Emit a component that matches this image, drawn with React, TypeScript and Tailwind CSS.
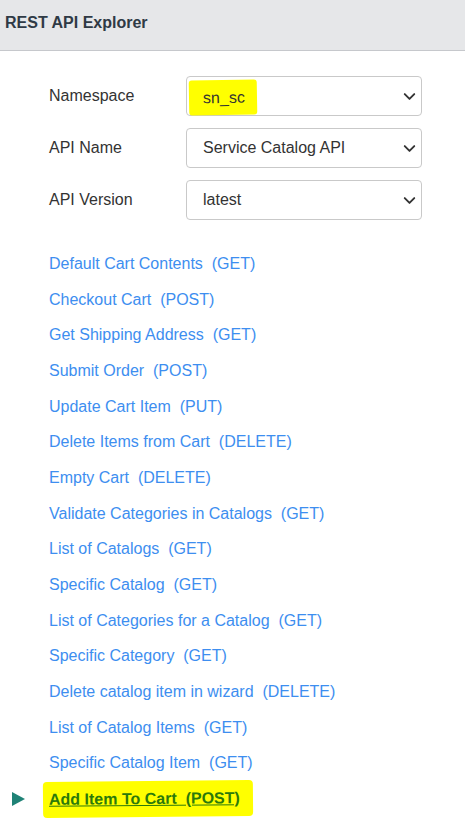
import { ChevronDown } from "lucide-react";

interface Endpoint {
    name: string;
    method: string;
}

const endpoints: Endpoint[] = [
    { name: "Default Cart Contents", method: "GET" },
    { name: "Checkout Cart", method: "POST" },
    { name: "Get Shipping Address", method: "GET" },
    { name: "Submit Order", method: "POST" },
    { name: "Update Cart Item", method: "PUT" },
    { name: "Delete Items from Cart", method: "DELETE" },
    { name: "Empty Cart", method: "DELETE" },
    { name: "Validate Categories in Catalogs", method: "GET" },
    { name: "List of Catalogs", method: "GET" },
    { name: "Specific Catalog", method: "GET" },
    { name: "List of Categories for a Catalog", method: "GET" },
    { name: "Specific Category", method: "GET" },
    { name: "Delete catalog item in wizard", method: "DELETE" },
    { name: "List of Catalog Items", method: "GET" },
    { name: "Specific Catalog Item", method: "GET" },
];

function SelectRow({ label, value, marked }: { label: string; value: string; marked?: boolean }) {
    return (
        <div className="flex items-center">
            <span className="w-[137px] text-[16px] text-[#333]">{label}</span>
            <div className="relative flex items-center w-[236px] h-[40px] rounded-[4px] border border-[#c9c9c9] bg-white pl-[16px] pr-[2px] text-[16px] text-[#333]">
                {marked ? (
                    <span className="-ml-[14px] pl-[14px] pr-[12px] pt-[6px] pb-[5px] mt-[3px] bg-[#ffff00] rounded-[3px] -rotate-1">{value}</span>
                ) : (
                    <span>{value}</span>
                )}
                <ChevronDown size={19} strokeWidth={2.4} className="ml-auto text-[#333]" />
            </div>
        </div>
    );
}

export default function App() {
    return (
        <div className="w-[465px] min-h-[826px] bg-white" style={{ fontFamily: '"Liberation Sans", Arial, sans-serif' }}>
            <div className="h-[51px] bg-[#e6e7e9] border-b border-[#c6c8cc] flex items-center px-[5px]">
                <h1 className="text-[16px] font-bold text-[#2f3a45] -mt-[4px]">REST API Explorer</h1>
            </div>

            {/* selectors */}
            <div className="pt-[25px] pl-[49px] flex flex-col gap-[12px]">
                <SelectRow label="Namespace" value="sn_sc" marked />
                <SelectRow label="API Name" value="Service Catalog API" />
                <SelectRow label="API Version" value="latest" />
            </div>

            {/* endpoint list */}
            <ul className="mt-[26px] flex flex-col">
                {endpoints.map((e) => (
                    <li key={e.name} className="h-[35.7px] flex items-center pl-[49px]">
                        <a className="text-[16px] text-[#3d8ef0] whitespace-pre cursor-pointer">
                            {e.name}  ({e.method})
                        </a>
                    </li>
                ))}
                <li className="h-[35.7px] flex items-center pl-[12px]">
                    <svg width="13" height="14" viewBox="0 0 13 14" className="shrink-0">
                        <polygon points="0,0 13,7 0,14" fill="#1f8276" />
                    </svg>
                    <span className="ml-[18px] -ml-[6px] pl-[6px] pr-[13px] py-[6px] bg-[#ffff00] rounded-[4px] rotate-[-0.5deg]">
                        <a className="text-[16px] font-bold text-[#2b7a0b] underline whitespace-pre cursor-pointer">
                            Add Item To Cart  (POST)
                        </a>
                    </span>
                </li>
            </ul>
        </div>
    );
}
